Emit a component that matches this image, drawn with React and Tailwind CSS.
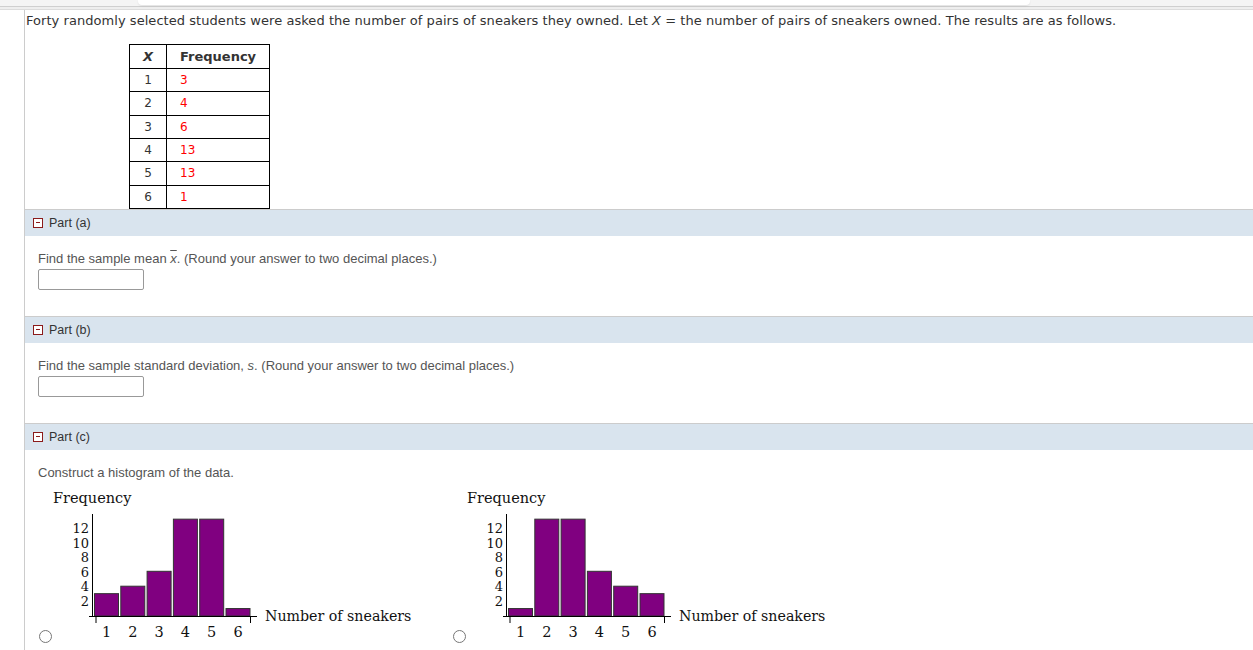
import React from "react";

const rows = [
  [1, 3],
  [2, 4],
  [3, 6],
  [4, 13],
  [5, 13],
  [6, 1],
];

function MinusIcon() {
  return (
    <span className="inline-flex items-center justify-center w-[10px] h-[10px] border border-[#8b1b1b] bg-white mr-[6px]">
      <span className="block w-[4px] h-[1px] bg-[#8b1b1b]" />
    </span>
  );
}

function PartHeader({ label }) {
  return (
    <div className="border-t border-[#cccccc] bg-[#d9e4ee] h-[27px] flex items-center pl-[8px] text-[12.5px] text-[#333333]" style={{ fontFamily: '"Liberation Sans", Arial, sans-serif' }}>
      <MinusIcon />
      <span>{label}</span>
    </div>
  );
}

function Histogram({ data }) {
  const baseY = 136;
  const unit = 7.45;
  const yLabels = [2, 4, 6, 8, 10, 12];
  return (
    <svg width="370" height="170" viewBox="0 0 370 170" style={{ fontFamily: '"DejaVu Serif", serif' }}>
      <text x="1" y="22.5" fontSize="14.5" fill="#111">Frequency</text>
      {yLabels.map((v) => (
        <text key={v} x="37" y={baseY - v * 7.3 + 4.5} fontSize="13" textAnchor="end" fill="#111">
          {v}
        </text>
      ))}
      {data.map((v, i) => {
        const h = v * unit;
        return (
          <rect
            key={i}
            x={42.5 + 26.3 * i}
            y={baseY - h}
            width={24}
            height={h}
            fill="#800080"
            stroke="#333"
            strokeWidth="1"
          />
        );
      })}
      <line x1="40.5" y1="34" x2="40.5" y2={baseY} stroke="#000" strokeWidth="1" />
      <line x1="37" y1={baseY + 0.5} x2="205" y2={baseY + 0.5} stroke="#000" strokeWidth="1" />
      <line x1="44" y1={baseY} x2="44" y2={baseY + 7} stroke="#000" strokeWidth="1" />
      <line x1="198.5" y1={baseY} x2="198.5" y2={baseY + 7} stroke="#000" strokeWidth="1" />
      {[1, 2, 3, 4, 5, 6].map((n, i) => (
        <text key={n} x={54.5 + 26.3 * i} y={156.5} fontSize="14.5" textAnchor="middle" fill="#111">
          {n}
        </text>
      ))}
      <text x="213" y={baseY + 5} fontSize="14.2" fill="#111">Number of sneakers</text>
    </svg>
  );
}

function ChartOption({ data }) {
  return (
    <div className="flex items-end w-[414px]">
      <div className="w-[13px] h-[13px] rounded-full border border-[#777777] bg-white mb-[7px] ml-[1px] shrink-0" />
      <Histogram data={data} />
    </div>
  );
}

export default function App() {
  const sans = { fontFamily: '"Liberation Sans", Arial, sans-serif' };
  return (
    <div className="w-[1253px] h-[650px] overflow-hidden bg-white">
      {/* top strip */}
      <div className="h-[6px] bg-[#f4f4f4] flex">
        <div className="ml-[138px] w-[892px] h-[5px] bg-white rounded-b-[4px] shadow-[0_1px_2px_rgba(0,0,0,0.08)]" />
      </div>
      <div className="h-[1px] bg-[#cfcfcf]" />
      <div className="h-[2px] bg-[#eeeeee]" />
      <div className="h-[1px] bg-[#dcdcdc]" />

      <div className="ml-[24px] border-l border-[#cccccc] h-[640px]">
        <p
          className="pl-[1px] pt-[3px] text-[13px] leading-[16px] text-[#333333] whitespace-nowrap tracking-[0.05px]"
          style={{ fontFamily: '"DejaVu Sans", Verdana, sans-serif' }}
        >
          Forty randomly selected students were asked the number of pairs of sneakers they owned. Let <i>X</i> = the number of pairs of sneakers owned. The results are as follows.
        </p>

        <table
          className="ml-[104px] mt-[15px] border-collapse border border-black text-[12px] text-[#333333]"
          style={{ fontFamily: '"DejaVu Sans", Verdana, sans-serif' }}
        >
          <thead>
            <tr className="h-[24px]">
              <th className="border border-black w-[37px] font-bold italic text-[13px]">X</th>
              <th className="border border-black w-[103px] font-bold text-[13px] text-left pl-[13px]">Frequency</th>
            </tr>
          </thead>
          <tbody>
            {rows.map(([x, f]) => (
              <tr key={x} className="h-[23.34px]">
                <td className="border border-black text-center">{x}</td>
                <td className="border border-black text-left pl-[13px] text-[#ff0000]">{f}</td>
              </tr>
            ))}
          </tbody>
        </table>

        <PartHeader label="Part (a)" />
        <div className="h-[80px] pl-[13px] pt-[15px] text-[13px] text-[#555555]" style={sans}>
          <div className="leading-[15px]">
            Find the sample mean <span className="italic overline">x</span>. (Round your answer to two decimal places.)
          </div>
          <div className="mt-[3px] w-[106px] h-[21px] border border-[#999999] rounded-[2px] bg-white" />
        </div>

        <PartHeader label="Part (b)" />
        <div className="h-[80px] pl-[13px] pt-[15px] text-[13px] text-[#555555]" style={sans}>
          <div className="leading-[15px]">
            Find the sample standard deviation, <span className="italic">s</span>. (Round your answer to two decimal places.)
          </div>
          <div className="mt-[3px] w-[106px] h-[21px] border border-[#999999] rounded-[2px] bg-white" />
        </div>

        <PartHeader label="Part (c)" />
        <div className="pl-[13px] pt-[15px] text-[13px] text-[#555555]" style={sans}>
          <div className="leading-[15px]">Construct a histogram of the data.</div>
          <div className="flex">
            <ChartOption data={[3, 4, 6, 13, 13, 1]} />
            <ChartOption data={[1, 13, 13, 6, 4, 3]} />
          </div>
        </div>
      </div>
    </div>
  );
}
